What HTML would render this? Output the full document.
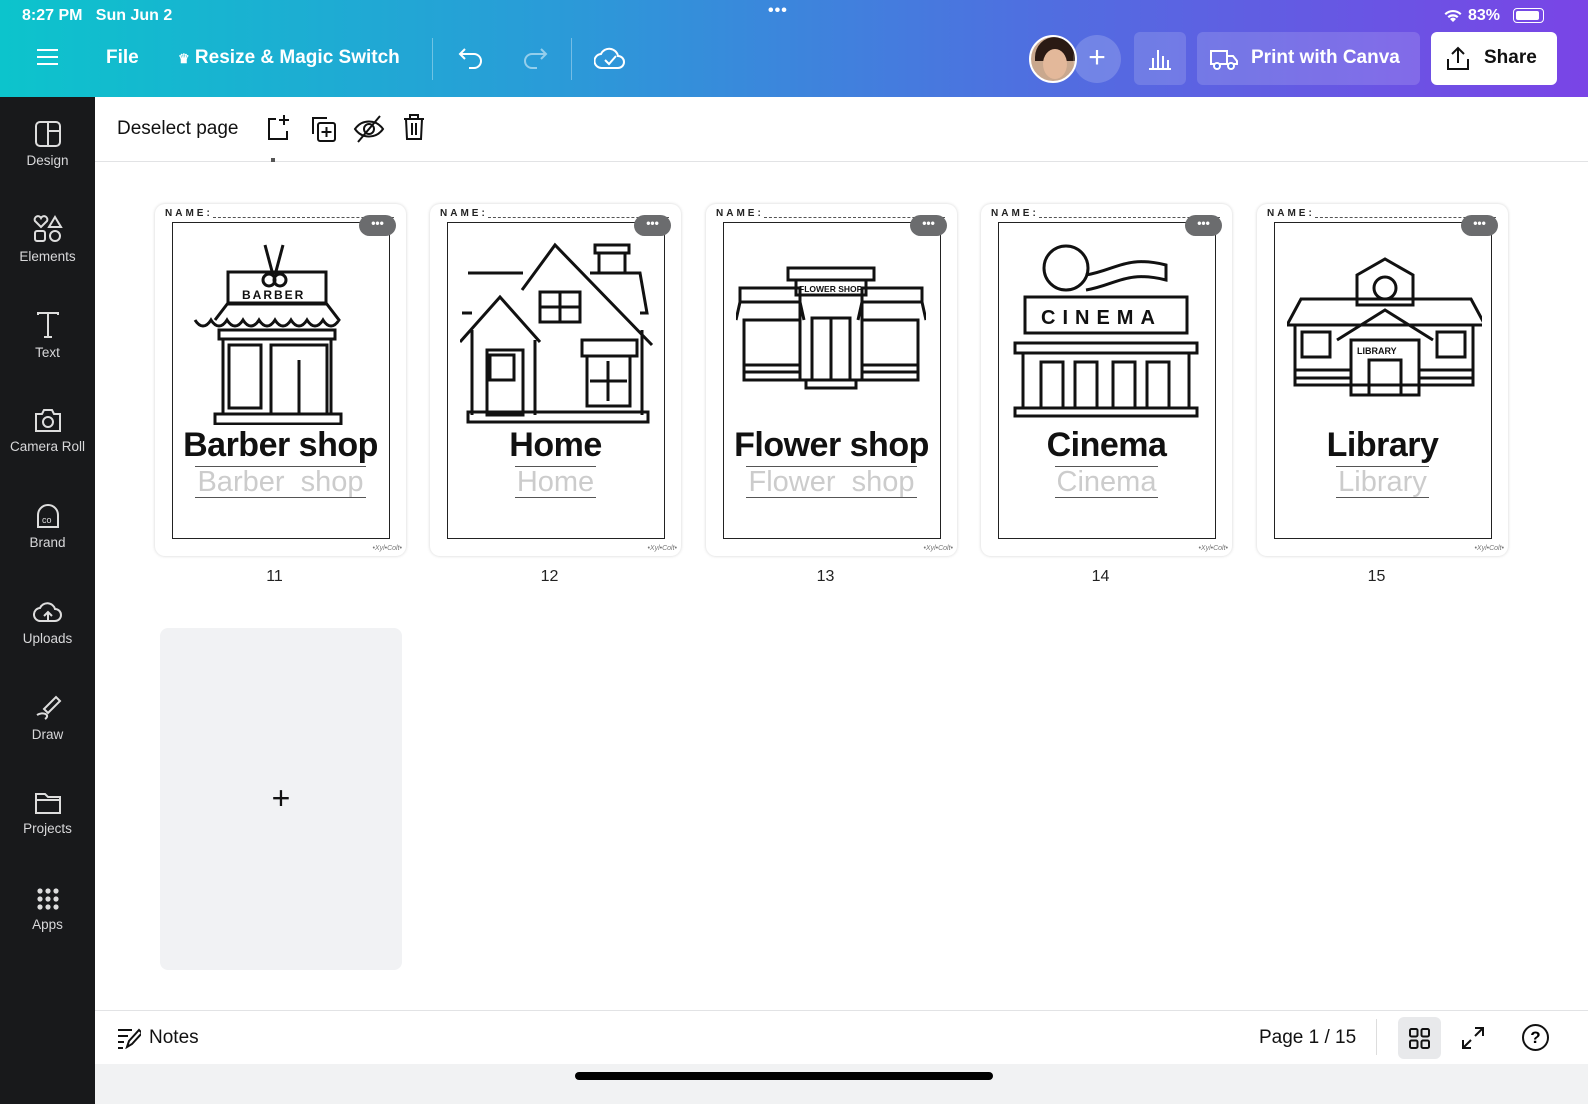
<!DOCTYPE html>
<html><head><meta charset="utf-8"><style>
*{margin:0;padding:0;box-sizing:border-box}
body{width:1588px;height:1104px;overflow:hidden;font-family:"Liberation Sans",sans-serif;background:#fff;position:relative}
.top{position:absolute;left:0;top:0;width:1588px;height:97px;background:linear-gradient(90deg,#0cc4cc 0%,#2a9bd8 35%,#4f6fe0 65%,#7a44e6 100%);color:#fff}
.top .t{position:absolute;font-size:16px;font-weight:bold}
.top .b{position:absolute;font-size:19px;font-weight:bold;top:47px}
.side{position:absolute;left:0;top:97px;width:95px;height:1007px;background:#18191b;color:#d8d8da}
.si{position:absolute;left:0;width:95px;text-align:center;font-size:13.5px}
.si svg{display:block;margin:0 auto 6px}
.tool{position:absolute;left:95px;top:97px;right:0;height:65px;border-bottom:1px solid #e2e3e5;background:#fff}
.card{position:absolute;top:204px;width:251px;height:352px;background:#fff;border-radius:10px;box-shadow:0 0 3px rgba(0,0,0,.18)}
.card .box{position:absolute;left:17px;top:18px;width:218px;height:317px;border:1.5px solid #222}
.card .nm{position:absolute;left:10px;top:4px;font-size:10px;letter-spacing:3px;color:#222;font-weight:bold}
.card .dl{position:absolute;left:58px;right:12px;top:13px;border-top:1px dashed #555}
.card .dots{position:absolute;right:10px;top:11px;width:37px;height:21px;border-radius:11px;background:#6b6c6e;color:#fff;font-size:12px;text-align:center;line-height:17px;font-weight:bold}
.card .ti{position:absolute;left:0;right:0;top:222px;text-align:center;font-size:34px;font-weight:bold;color:#111;letter-spacing:-0.5px}
.card .tr{position:absolute;left:0;right:0;top:262px;text-align:center;font-size:29px;color:#ccc;font-family:"Liberation Sans",sans-serif}
.card .tr span{border-top:1px solid #555;border-bottom:1px solid #555;padding:0 2px;display:inline-block;line-height:30px}
.card .sg{position:absolute;right:4px;bottom:4px;font-size:7px;color:#777;font-style:italic}
.card svg.ill{position:absolute;left:30px;top:36px}
.num{position:absolute;top:568px;width:251px;text-align:center;font-size:16px;color:#222}
.bot{position:absolute;left:95px;top:1010px;right:0;height:54px;border-top:1px solid #e2e3e5;background:#fff}
.home{position:absolute;left:95px;top:1064px;right:0;height:40px;background:#f1f2f3}
</style></head><body>
<div class="top">
 <div class="t" style="left:22px;top:7px">8:27 PM&nbsp;&nbsp;&nbsp;Sun Jun 2</div>
 <div class="t" style="left:768px;top:2px;letter-spacing:1px">•••</div>
 <div class="t" style="left:1468px;top:7px">83%</div>
 <svg style="position:absolute;left:1443px;top:8px" width="20" height="15" viewBox="0 0 20 15"><path d="M10 14l-3-3a4 4 0 016 0zM4.5 8.5a8 8 0 0111 0l-1.5 1.5a6 6 0 00-8 0zM1.5 5.5a12 12 0 0117 0L17 7a10 10 0 00-14 0z" fill="#fff"/></svg>
 <div style="position:absolute;left:1513px;top:8px;width:31px;height:15px;border:1.5px solid #fff;border-radius:4px"><div style="margin:1.5px;width:23px;height:9px;background:#fff;border-radius:2px"></div></div>
 <svg style="position:absolute;left:37px;top:48px" width="21" height="18"><path d="M0 2h21M0 9h21M0 16h21" stroke="#fff" stroke-width="2"/></svg>
 <div class="b" style="left:106px">File</div>
 <div class="b" style="left:178px"><span style="font-size:13px">♛</span> Resize &amp; Magic Switch</div>
 <div style="position:absolute;left:432px;top:38px;width:1px;height:42px;background:rgba(255,255,255,.35)"></div>
 <div style="position:absolute;left:571px;top:38px;width:1px;height:42px;background:rgba(255,255,255,.35)"></div>
 <svg style="position:absolute;left:458px;top:46px" width="28" height="24" viewBox="0 0 28 24"><path d="M7 3L2 8l5 5M2 8h14a7 7 0 010 14h-5" stroke="#fff" stroke-width="2" fill="none"/></svg>
 <svg style="position:absolute;left:520px;top:46px" width="28" height="24" viewBox="0 0 28 24"><path d="M21 3l5 5-5 5M26 8H12a7 7 0 000 14h5" stroke="rgba(255,255,255,.5)" stroke-width="2" fill="none"/></svg>
 <svg style="position:absolute;left:594px;top:44px" width="32" height="28" viewBox="0 0 32 28"><path d="M8 24h16a6 6 0 000-12 9 9 0 00-17-2A7 7 0 008 24z" stroke="#fff" stroke-width="2" fill="none"/><path d="M11 16l4 4 7-8" stroke="#fff" stroke-width="2" fill="none"/></svg>
 <div style="position:absolute;left:1029px;top:35px;width:48px;height:48px;border-radius:50%;background:#c9a88e;border:2px solid #fff;overflow:hidden"><div style="position:absolute;left:4px;top:0;width:40px;height:24px;background:#2a1a14;border-radius:20px 20px 0 0"></div><div style="position:absolute;left:12px;top:12px;width:24px;height:30px;border-radius:50%;background:#e3b89a"></div></div>
 <div style="position:absolute;left:1073px;top:35px;width:48px;height:48px;border-radius:50%;background:rgba(255,255,255,.18);text-align:center;line-height:46px;font-size:30px">+</div>
 <div style="position:absolute;left:1134px;top:32px;width:52px;height:53px;border-radius:6px;background:rgba(255,255,255,.15)"><svg style="margin:14px" width="24" height="24"><path d="M1 23h22M5 22V12M10 22V4M15 22V10M20 22V14" stroke="#fff" stroke-width="2"/></svg></div>
 <div style="position:absolute;left:1197px;top:32px;width:223px;height:53px;border-radius:6px;background:rgba(255,255,255,.15)">
  <svg style="position:absolute;left:12px;top:16px" width="30" height="22" viewBox="0 0 30 22"><path d="M2 3h16v13H2zM18 8h6l4 5v3h-10" stroke="#fff" stroke-width="2" fill="none"/><circle cx="8" cy="18" r="3" fill="#4f6fe0" stroke="#fff" stroke-width="2"/><circle cx="22" cy="18" r="3" fill="#4f6fe0" stroke="#fff" stroke-width="2"/></svg>
  <div class="b" style="left:54px;top:15px">Print with Canva</div></div>
 <div style="position:absolute;left:1431px;top:32px;width:126px;height:53px;border-radius:6px;background:#fff;color:#111">
  <svg style="position:absolute;left:14px;top:14px" width="26" height="26" viewBox="0 0 26 26"><path d="M13 17V3M7 8l6-6 6 6M3 13v10h20V13" stroke="#111" stroke-width="2" fill="none"/></svg>
  <div style="position:absolute;left:53px;top:15px;font-size:19px;font-weight:bold">Share</div></div>
</div>
<div class="side">
 <div class="si" style="top:24px"><svg width="26" height="26"><rect x="1" y="1" width="24" height="24" rx="4" stroke="#ddd" stroke-width="2" fill="none"/><path d="M13 1v24M13 10h12" stroke="#ddd" stroke-width="2"/></svg>Design</div>
 <div class="si" style="top:118px"><svg width="30" height="28"><path d="M8 12l-6-6a3 3 0 016-3 3 3 0 016 3zM22 2l6 10H16z" stroke="#ddd" stroke-width="2" fill="none"/><rect x="2" y="16" width="10" height="10" rx="2" stroke="#ddd" stroke-width="2" fill="none"/><circle cx="22" cy="21" r="5" stroke="#ddd" stroke-width="2" fill="none"/></svg>Elements</div>
 <div class="si" style="top:214px"><svg width="24" height="28"><path d="M2 4V2h20v2M12 2v24M8 26h8" stroke="#ddd" stroke-width="2" fill="none"/></svg>Text</div>
 <div class="si" style="top:310px"><svg width="28" height="26"><path d="M2 7h6l2-4h8l2 4h6v17H2z" stroke="#ddd" stroke-width="2" fill="none"/><circle cx="14" cy="15" r="5" stroke="#ddd" stroke-width="2" fill="none"/></svg>Camera Roll</div>
 <div class="si" style="top:406px"><svg width="28" height="26"><path d="M4 24V12a10 10 0 0120 0v12z" stroke="#ddd" stroke-width="2" fill="none"/><text x="8" y="20" font-size="9" fill="#ddd" font-family="Liberation Sans">co</text></svg>Brand</div>
 <div class="si" style="top:502px"><svg width="30" height="26"><path d="M8 22h14a6 6 0 000-12 8 8 0 00-15-1A6 6 0 008 22zM15 23v-9M11 17l4-4 4 4" stroke="#ddd" stroke-width="2" fill="none"/></svg>Uploads</div>
 <div class="si" style="top:598px"><svg width="28" height="26"><path d="M10 14l12-12 4 4-12 12zM3 20c6-4 14 0 8 4" stroke="#ddd" stroke-width="2" fill="none"/></svg>Draw</div>
 <div class="si" style="top:694px"><svg width="28" height="24"><path d="M2 3h9l3 3h12v16H2z M2 9h24" stroke="#ddd" stroke-width="2" fill="none"/></svg>Projects</div>
 <div class="si" style="top:790px"><svg width="24" height="24" fill="#ddd"><circle cx="4" cy="4" r="2.6"/><circle cx="12" cy="4" r="2.6"/><circle cx="20" cy="4" r="2.6"/><circle cx="4" cy="12" r="2.6"/><circle cx="12" cy="12" r="2.6"/><circle cx="20" cy="12" r="2.6"/><circle cx="4" cy="20" r="2.6"/><circle cx="12" cy="20" r="2.6"/><circle cx="20" cy="20" r="2.6"/></svg>Apps</div>
</div>
<div class="tool">
 <div style="position:absolute;left:22px;top:21px;font-size:19px;color:#111">Deselect page</div>
 <svg style="position:absolute;left:171px;top:17px" width="26" height="28"><path d="M10 5H3v20h18v-8M18 1v10M13 6h10" stroke="#111" stroke-width="2" fill="none"/></svg>
 <svg style="position:absolute;left:216px;top:18px" width="28" height="28"><path d="M2 19V3h14" stroke="#111" stroke-width="2" fill="none"/><rect x="7" y="8" width="17" height="18" rx="2" stroke="#111" stroke-width="2" fill="none"/><path d="M15.5 12v10M10.5 17h10" stroke="#111" stroke-width="2"/></svg>
 <svg style="position:absolute;left:258px;top:17px" width="32" height="30"><path d="M2 15c7-10 21-10 28 0-7 10-21 10-28 0z" stroke="#111" stroke-width="2" fill="none"/><circle cx="16" cy="15" r="5" stroke="#111" stroke-width="2" fill="none"/><path d="M27 2L5 28" stroke="#111" stroke-width="2"/></svg>
 <svg style="position:absolute;left:307px;top:16px" width="24" height="28"><path d="M2 6h20M8 6V2h8v4M4 6l1 20h14l1-20M10 10v12M14 10v12" stroke="#111" stroke-width="2" fill="none"/></svg>
 <div style="position:absolute;top:61px;left:176px;width:4px;height:4px;background:#555"></div>
</div>

<div class="card" style="left:155px"><div class="nm">NAME:</div><div class="dl"></div><div class="box"></div><div class="dots">•••</div>
<svg class="ill" width="190" height="185" viewBox="0 0 190 185" fill="none" stroke="#111" stroke-width="3"><path d="M80 5l8 30M98 5l-8 30"/><circle cx="84" cy="40" r="6"/><circle cx="95" cy="40" r="6"/><rect x="43" y="32" width="98" height="32"/><text x="57" y="59" font-size="12" font-weight="bold" fill="#111" stroke="none" letter-spacing="2" font-family="Liberation Sans">BARBER</text><path d="M30 80l13-17h98l13 17c-5 8-11 8-16 0-5 8-11 8-16 0-5 8-11 8-16 0-5 8-11 8-16 0-5 8-11 8-16 0-5 8-11 8-16 0-5 8-11 8-16 0-5 8-11 8-16 0-5 8-11 8-16 0"/><rect x="34" y="90" width="116" height="9"/><rect x="38" y="99" width="108" height="75"/><rect x="44" y="105" width="32" height="63"/><rect x="86" y="105" width="56" height="69"/><path d="M114 120v54"/><rect x="30" y="174" width="126" height="10"/></svg>
<div class="ti">Barber shop</div><div class="tr"><span>Barber&nbsp; shop</span></div><div class="sg">•Xyl•Colt•</div></div>

<div class="card" style="left:430px"><div class="nm">NAME:</div><div class="dl"></div><div class="box"></div><div class="dots">•••</div>
<svg class="ill" width="195" height="185" viewBox="0 0 195 185" fill="none" stroke="#111" stroke-width="3"><rect x="135" y="5" width="34" height="8"/><rect x="139" y="13" width="26" height="20"/><path d="M8 33h55M130 33h50l7 40h-7M2 73h10"/><path d="M0 102l40-45 40 45M62 50L95 5l97 100"/><rect x="80" y="52" width="40" height="30"/><path d="M100 52v30M80 67h40"/><path d="M12 90v85M182 90v85M75 100v75"/><rect x="27" y="110" width="36" height="65"/><rect x="30" y="115" width="24" height="25"/><rect x="122" y="100" width="55" height="16"/><rect x="127" y="116" width="43" height="50"/><path d="M148 121v40M130 141h37"/><rect x="8" y="172" width="180" height="10"/></svg>
<div class="ti">Home</div><div class="tr"><span>Home</span></div><div class="sg">•Xyl•Colt•</div></div>

<div class="card" style="left:706px"><div class="nm">NAME:</div><div class="dl"></div><div class="box"></div><div class="dots">•••</div>
<svg class="ill" width="190" height="185" viewBox="0 0 190 185" fill="none" stroke="#111" stroke-width="3"><rect x="52" y="28" width="86" height="12"/><rect x="60" y="40" width="70" height="15"/><text x="63" y="52" font-size="8.5" font-weight="bold" fill="#111" stroke="none" font-family="Liberation Sans">FLOWER SHOP</text><rect x="4" y="48" width="60" height="14"/><rect x="126" y="48" width="60" height="14"/><path d="M0 80l4-18h60l4 18M122 80l4-18h60l4 18"/><rect x="8" y="80" width="56" height="60"/><rect x="126" y="80" width="56" height="60"/><rect x="64" y="55" width="62" height="85"/><rect x="76" y="78" width="38" height="62"/><path d="M95 78v62M8 125h56M126 125h56M8 132h56M126 132h56"/><rect x="70" y="140" width="50" height="8"/></svg>
<div class="ti">Flower shop</div><div class="tr"><span>Flower&nbsp; shop</span></div><div class="sg">•Xyl•Colt•</div></div>

<div class="card" style="left:981px"><div class="nm">NAME:</div><div class="dl"></div><div class="box"></div><div class="dots">•••</div>
<svg class="ill" width="190" height="185" viewBox="0 0 190 185" fill="none" stroke="#111" stroke-width="3"><circle cx="55" cy="28" r="22"/><path d="M75 35c30-5 40-20 80-10v15c-40-10-50 5-80 10"/><rect x="14" y="57" width="162" height="36"/><text x="30" y="84" font-size="20" font-weight="bold" fill="#111" stroke="none" letter-spacing="7" font-family="Liberation Sans">CINEMA</text><rect x="4" y="103" width="182" height="10"/><rect x="12" y="113" width="166" height="55"/><rect x="30" y="122" width="22" height="46"/><rect x="64" y="122" width="22" height="46"/><rect x="102" y="122" width="22" height="46"/><rect x="136" y="122" width="22" height="46"/><rect x="4" y="168" width="182" height="8"/></svg>
<div class="ti">Cinema</div><div class="tr"><span>Cinema</span></div><div class="sg">•Xyl•Colt•</div></div>

<div class="card" style="left:1257px"><div class="nm">NAME:</div><div class="dl"></div><div class="box"></div><div class="dots">•••</div>
<svg class="ill" width="195" height="185" viewBox="0 0 195 185" fill="none" stroke="#111" stroke-width="3"><path d="M70 35l28-16 28 16v30H70z"/><circle cx="98" cy="48" r="11"/><path d="M0 85l14-26h170l14 26z"/><path d="M50 100l48-30 48 30"/><rect x="8" y="85" width="178" height="60"/><rect x="15" y="92" width="28" height="25"/><rect x="150" y="92" width="28" height="25"/><rect x="64" y="100" width="68" height="55"/><text x="70" y="114" font-size="9" font-weight="bold" fill="#111" stroke="none" font-family="Liberation Sans">LIBRARY</text><rect x="82" y="120" width="32" height="35"/><path d="M8 130h56M132 130h54M8 138h56M132 138h54"/></svg>
<div class="ti">Library</div><div class="tr"><span>Library</span></div><div class="sg">•Xyl•Colt•</div></div>

<div class="num" style="left:149px">11</div><div class="num" style="left:424px">12</div><div class="num" style="left:700px">13</div><div class="num" style="left:975px">14</div><div class="num" style="left:1251px">15</div>

<div style="position:absolute;left:160px;top:628px;width:242px;height:342px;background:#f1f2f4;border-radius:8px"><div style="position:absolute;left:0;right:0;top:152px;text-align:center;font-size:32px;font-weight:300;color:#111">+</div></div>

<div class="bot">
 <svg style="position:absolute;left:22px;top:16px" width="24" height="22"><path d="M1 3h14M1 9h10M1 15h6M1 21h5M10 20l2-6 10-11 3 3-10 11z" stroke="#111" stroke-width="2" fill="none"/></svg>
 <div style="position:absolute;left:54px;top:16px;font-size:19px;color:#111">Notes</div>
 <div style="position:absolute;left:1164px;top:16px;font-size:19px;color:#111">Page 1 / 15</div>
 <div style="position:absolute;left:1281px;top:8px;width:1px;height:36px;background:#ddd"></div>
 <div style="position:absolute;left:1303px;top:6px;width:43px;height:42px;border-radius:6px;background:#e8e9eb"><svg style="margin:11px" width="21" height="21"><rect x="1" y="1" width="7.5" height="7.5" rx="1.5" stroke="#111" stroke-width="2" fill="none"/><rect x="12.5" y="1" width="7.5" height="7.5" rx="1.5" stroke="#111" stroke-width="2" fill="none"/><rect x="1" y="12.5" width="7.5" height="7.5" rx="1.5" stroke="#111" stroke-width="2" fill="none"/><rect x="12.5" y="12.5" width="7.5" height="7.5" rx="1.5" stroke="#111" stroke-width="2" fill="none"/></svg></div>
 <svg style="position:absolute;left:1367px;top:16px" width="22" height="22"><path d="M13 1h8v8M21 1l-8 8M9 21H1v-8M1 21l8-8" stroke="#111" stroke-width="2" fill="none"/></svg>
 <div style="position:absolute;left:1427px;top:13px;width:27px;height:27px;border:2px solid #111;border-radius:50%;text-align:center;font-size:17px;line-height:23px;font-weight:bold">?</div>
</div>
<div class="home"><div style="position:absolute;left:480px;top:8px;width:418px;height:8px;border-radius:4px;background:#000"></div></div>
</body></html>
